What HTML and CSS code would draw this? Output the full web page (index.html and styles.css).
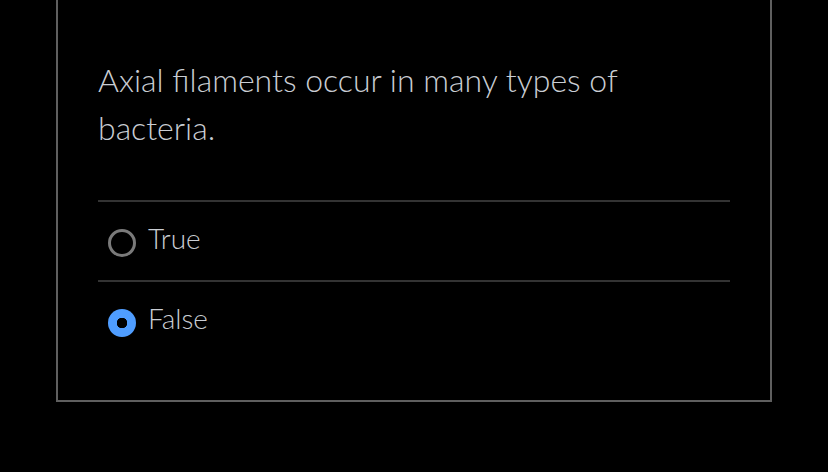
FILE: index.html
```html
<!DOCTYPE html>
<html>
<head>
<meta charset="utf-8">
<link rel="stylesheet" href="styles.css">
</head>
<body>
<div class="card">
  <p class="question">Axial filaments occur in many types of bacteria.</p>
  <div class="options">
    <label class="option">
      <span class="radio"></span>
      <span class="label">True</span>
    </label>
    <label class="option">
      <span class="radio checked"></span>
      <span class="label">False</span>
    </label>
  </div>
</div>
</body>
</html>
```
FILE: styles.css
```css
html, body {
  margin: 0;
  padding: 0;
  background: #000;
}
body {
  font-family: Lato, "Open Sans", sans-serif;
  font-weight: 300;
  color: #c9cdd3;
}
.card {
  margin-left: 56px;
  border: 2px solid #5f5f5f;
  border-top: none;
  padding: 56px 40px 40px 40px;
  box-sizing: content-box;
  width: 632px;
}
.question {
  margin: 0;
  font-size: 32px;
  line-height: 48px;
  max-width: 560px;
}
.options {
  margin-top: 48px;
}
.option {
  display: flex;
  align-items: center;
  gap: 12px;
  height: 78px;
  border-top: 2px solid #333;
  padding-left: 10px;
  box-sizing: content-box;
}
.radio {
  width: 22px;
  height: 22px;
  border: 3px solid #7a7a7a;
  border-radius: 50%;
  margin-top: 4px;
  flex: none;
}
.radio.checked {
  border: none;
  width: 28px;
  height: 28px;
  background: radial-gradient(circle, #000 0 5px, #4f9dff 5.5px);
}
.label {
  font-size: 28px;
  margin-bottom: 6px;
}
```
